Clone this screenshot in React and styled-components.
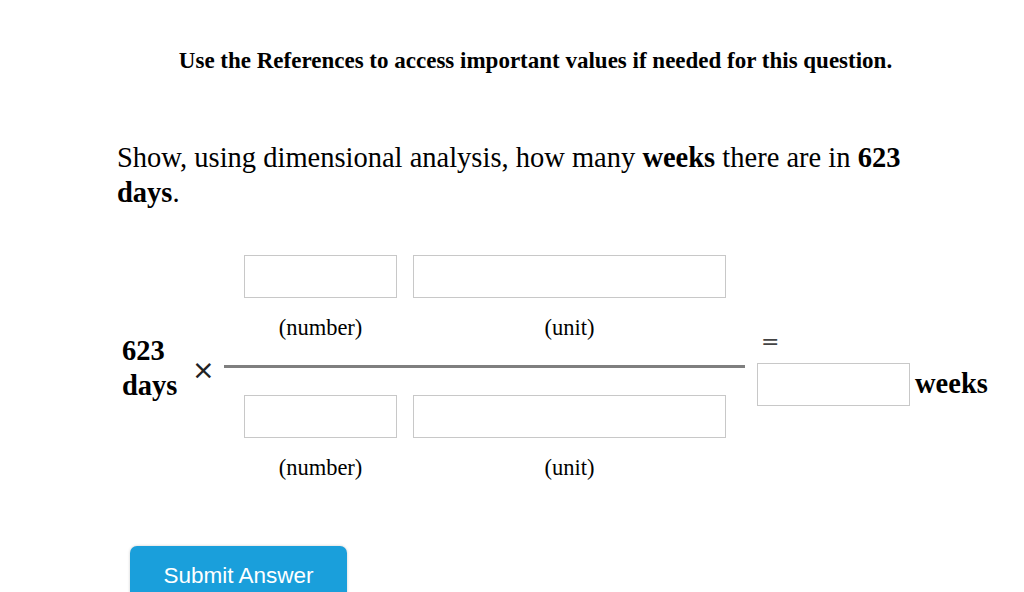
import React from "react";
import styled, { createGlobalStyle } from "styled-components";

const GlobalStyle = createGlobalStyle`
    html, body {
        margin: 0;
        padding: 0;
        background: #ffffff;
    }
    body {
        font-family: "Liberation Serif", "Times New Roman", serif;
        color: #000000;
    }
`;

function App() {
    return (
        <>
            <GlobalStyle />
            <Page>
                <ReferenceNote>
                    Use the References to access important values if needed for this question.
                </ReferenceNote>
                <Question>
                    Show, using dimensional analysis, how many <b>weeks</b> there are in <b>623</b>{" "}
                    <b>days</b>.
                </Question>
                <EquationRow>
                    <GivenValue>
                        <span>623</span>
                        <span>days</span>
                    </GivenValue>
                    <Times>×</Times>
                    <Fraction>
                        <FactorRow>
                            <FactorCell>
                                <NumberInput type="text" />
                                <FieldLabel>(number)</FieldLabel>
                            </FactorCell>
                            <FactorCell>
                                <UnitInput type="text" />
                                <FieldLabel>(unit)</FieldLabel>
                            </FactorCell>
                        </FactorRow>
                        <FractionBar />
                        <FactorRow>
                            <FactorCell>
                                <NumberInput type="text" />
                                <FieldLabel>(number)</FieldLabel>
                            </FactorCell>
                            <FactorCell>
                                <UnitInput type="text" />
                                <FieldLabel>(unit)</FieldLabel>
                            </FactorCell>
                        </FactorRow>
                    </Fraction>
                    <ResultColumn>
                        <Equals>=</Equals>
                        <NumberInput type="text" />
                    </ResultColumn>
                    <ResultUnit>weeks</ResultUnit>
                </EquationRow>
                <SubmitButton type="button">Submit Answer</SubmitButton>
            </Page>
        </>
    );
}

export default App;

const Page = styled.div`
    width: 1024px;
    height: 592px;
    overflow: hidden;
    box-sizing: border-box;
    padding: 46px 70px 0 117px;
`;

const ReferenceNote = styled.div`
    text-align: center;
    font-weight: 700;
    font-size: 23px;
    line-height: 30px;
`;

const Question = styled.div`
    margin-top: 64px;
    font-size: 28.5px;
    line-height: 35px;
    max-width: 800px;

    b {
        font-weight: 700;
    }
`;

const EquationRow = styled.div`
    display: flex;
    align-items: center;
    margin-top: 45px;

    & > * {
        flex-shrink: 0;
    }
`;

const GivenValue = styled.div`
    display: flex;
    flex-direction: column;
    width: 70px;
    padding-left: 5px;
    font-weight: 700;
    font-size: 28.5px;
    line-height: 35px;
`;

const Times = styled.div`
    width: 32px;
    font-family: "DejaVu Sans", sans-serif;
    font-size: 27px;
    color: #222222;
    padding-top: 2px;
`;

const Fraction = styled.div`
    display: flex;
    flex-direction: column;
    width: 521px;
`;

const FactorRow = styled.div`
    display: flex;
    column-gap: 16px;
    padding-left: 20px;
`;

const FactorCell = styled.div`
    display: flex;
    flex-direction: column;
    align-items: center;
`;

const BaseInput = styled.input`
    height: 43px;
    box-sizing: border-box;
    border: 1px solid #c8c8c8;
    background: #ffffff;
    padding: 0 6px;
    margin: 0;
    outline: none;
`;

const NumberInput = styled(BaseInput)`
    width: 153px;
`;

const UnitInput = styled(BaseInput)`
    width: 313px;
`;

const FieldLabel = styled.div`
    margin-top: 17px;
    font-size: 22.5px;
    line-height: 26px;
`;

const FractionBar = styled.div`
    height: 3px;
    background: #7f7f7f;
    margin: 24px 0 27px;
`;

const ResultColumn = styled.div`
    display: flex;
    flex-direction: column;
    margin-left: 12px;
`;

const Equals = styled.div`
    padding-left: 4px;
    font-family: "DejaVu Sans", sans-serif;
    font-size: 22px;
    line-height: 22px;
    color: #444444;
    margin-bottom: 10px;
`;

const ResultUnit = styled.div`
    margin-left: 5px;
    padding-top: 32px;
    font-weight: 700;
    font-size: 28.5px;
`;

const SubmitButton = styled.button`
    display: flex;
    justify-content: center;
    align-items: flex-start;
    margin: 65px 0 0 13px;
    width: 217px;
    height: 60px;
    padding: 17px 0 0;
    box-sizing: border-box;
    border: none;
    border-radius: 7px;
    background: #1a9fdb;
    color: #ffffff;
    font-family: "Liberation Sans", Arial, sans-serif;
    font-size: 22.5px;
    line-height: 26px;
    box-shadow: 0 0 3px rgba(0, 0, 0, 0.2);
    cursor: pointer;
`;
